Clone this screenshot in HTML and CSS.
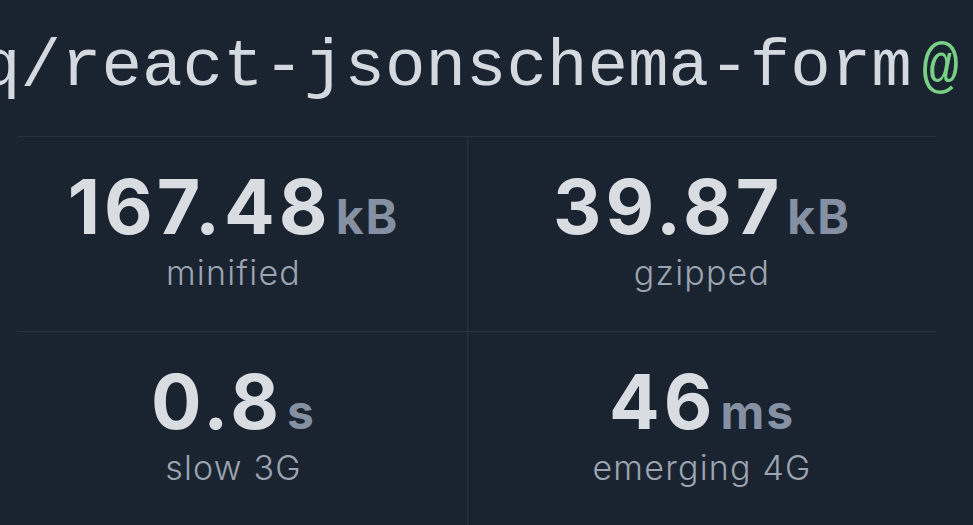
FILE: index.html
```html
<!DOCTYPE html>
<html lang="en">
<head>
    <meta charset="UTF-8">
    <meta name="viewport" content="width=device-width, initial-scale=1.0">
    <title>react-jsonschema-form - bundle size</title>
    <link rel="stylesheet" href="styles.css">
</head>
<body>

    <!-- Package name -->
    <header class="package-header">
        <h1 class="package-name">q/react-jsonschema-form<span class="at">@</span></h1>
    </header>

    <!-- Size and timing stats -->
    <section class="stats">
        <div class="stat stat-left">
            <div class="stat-value">167.48<span class="unit">kB</span></div>
            <div class="stat-label">minified</div>
        </div>
        <div class="stat">
            <div class="stat-value">39.87<span class="unit">kB</span></div>
            <div class="stat-label">gzipped</div>
        </div>
        <div class="stat stat-left">
            <div class="stat-value">0.8<span class="unit">s</span></div>
            <div class="stat-label">slow 3G</div>
        </div>
        <div class="stat">
            <div class="stat-value">46<span class="unit">ms</span></div>
            <div class="stat-label">emerging 4G</div>
        </div>
    </section>

</body>
</html>
```

FILE: styles.css
```css
* {
    margin: 0;
    padding: 0;
    box-sizing: border-box;
}

body {
    background-color: #1a2330;
    font-family: 'Inter', 'Liberation Sans', sans-serif;
    overflow: hidden;
}

.package-header {
    padding-top: 27px;
}

.package-name {
    margin-left: -20px;
    font-family: 'Liberation Mono', monospace;
    font-size: 67.5px;
    font-weight: normal;
    line-height: 81px;
    color: #d4d9e0;
    white-space: nowrap;
}

.package-name .at {
    margin-left: 10px;
    font-size: 62px;
    color: #78cf85;
}

.stats {
    display: grid;
    grid-template-columns: 450px 468px;
    margin-top: 27px;
    margin-left: 18px;
    width: 918px;
}

.stat {
    border-top: 1px solid #2b3542;
    padding: 32px 0 38px;
    text-align: center;
}

.stat-left {
    padding-right: 18px;
    border-right: 1px solid #2b3542;
}

.stat-value {
    font-size: 75px;
    font-weight: 700;
    line-height: 75px;
    color: #d9dce1;
    letter-spacing: 4px;
}

.stat-value .unit {
    margin-left: 4px;
    font-size: 48px;
    line-height: 48px;
    color: #8591a2;
    letter-spacing: 2px;
}

.stat-label {
    margin-top: 9px;
    font-size: 34px;
    font-weight: 300;
    line-height: 40px;
    color: #9ba4b0;
    letter-spacing: 1.2px;
}
```
